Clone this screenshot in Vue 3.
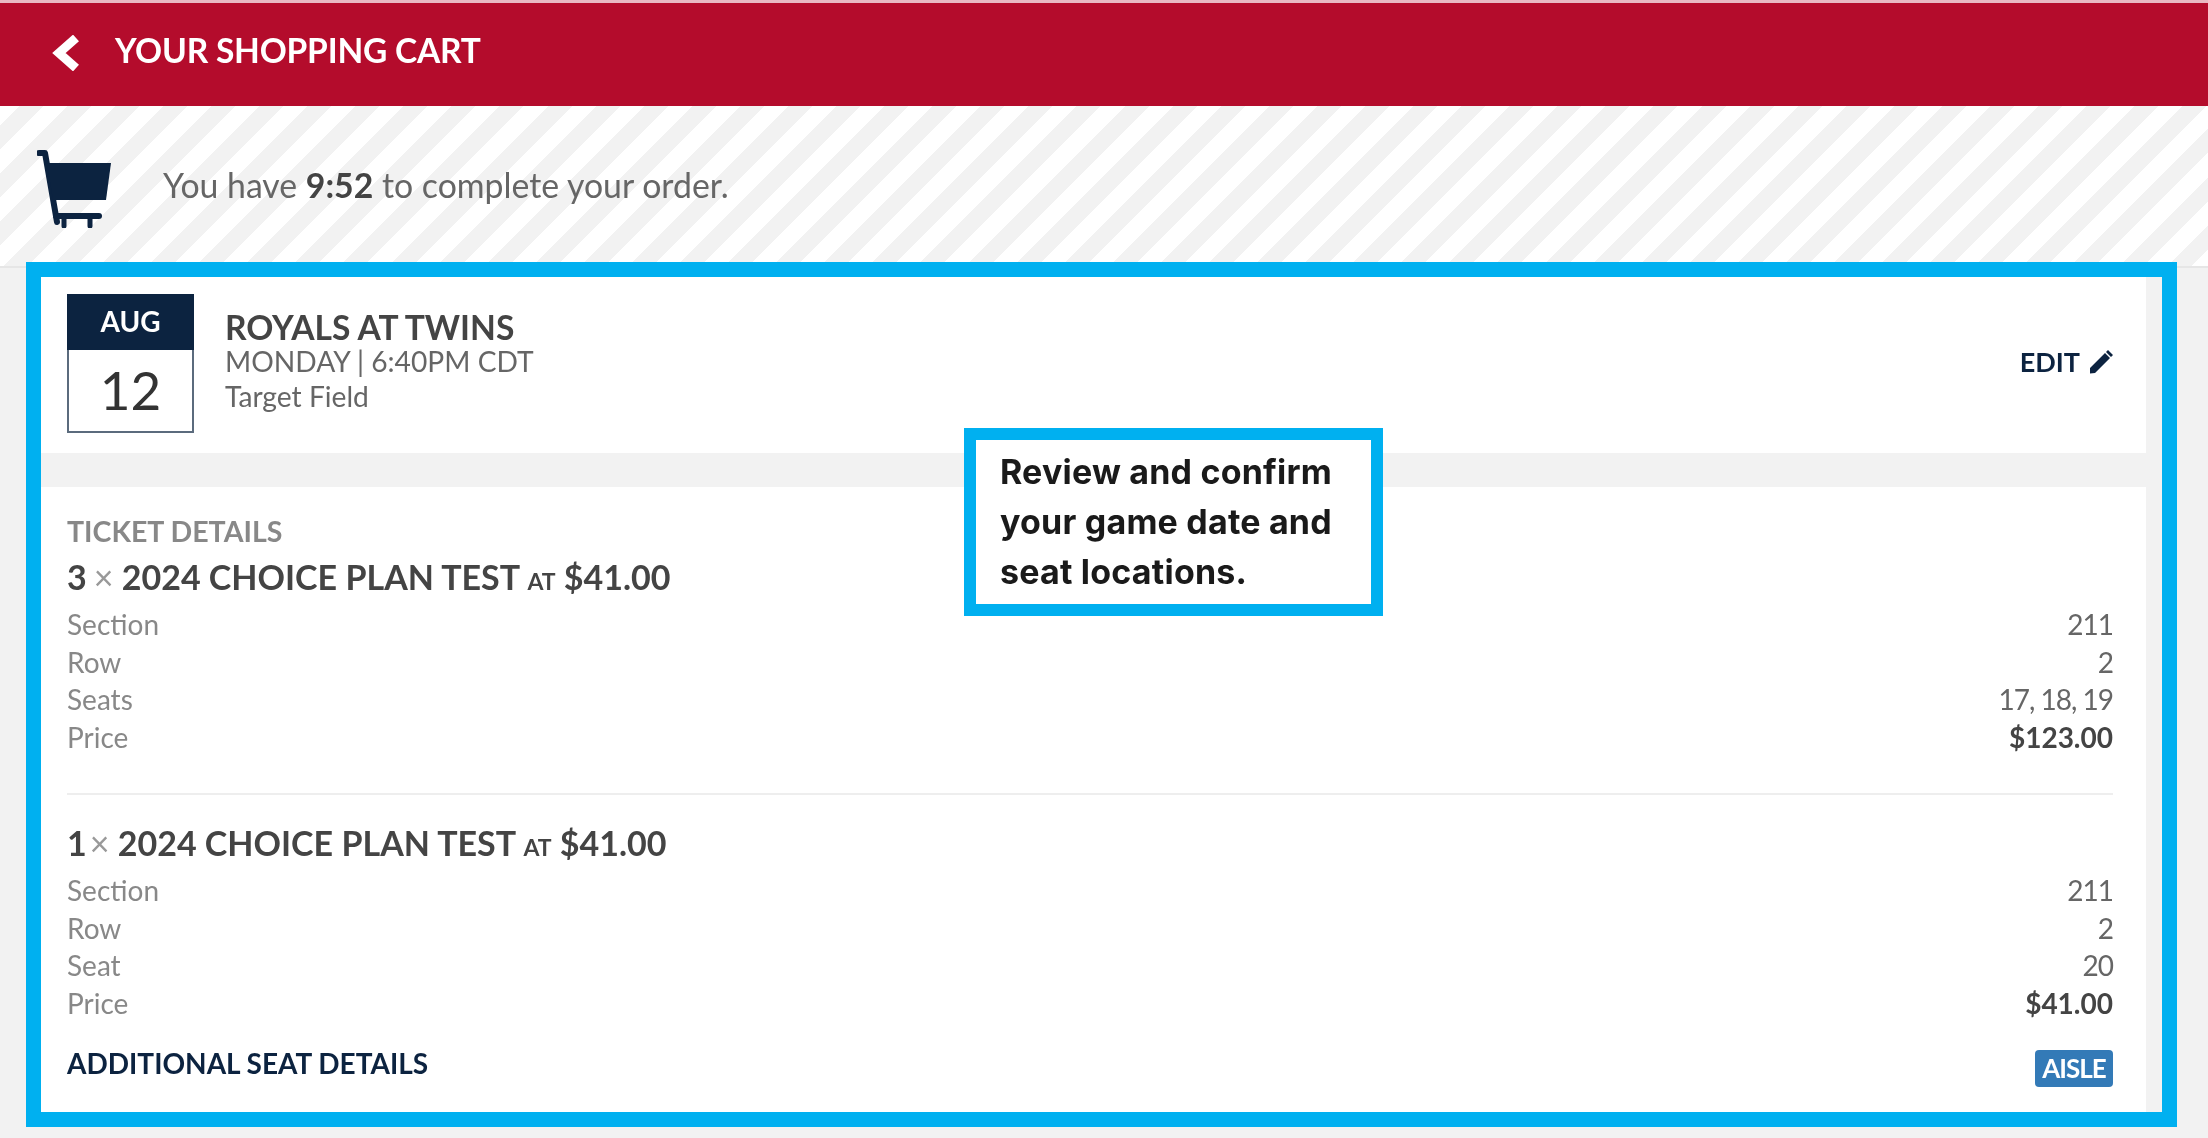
<script setup>
const groups = [
  { qty: '3', rows: [['Section', '211'], ['Row', '2'], ['Seats', '17, 18, 19']], price: '$123.00' },
  { qty: '1', rows: [['Section', '211'], ['Row', '2'], ['Seat', '20']], price: '$41.00' },
]
</script>

<template>
  <div class="page">
    <header class="bar">
      <svg class="back" viewBox="0 0 28 36" aria-hidden="true"><path d="M24 3 L7 18 L24 33" fill="none" stroke="#fff" stroke-width="9" stroke-linejoin="miter"/></svg>
      <h1>YOUR SHOPPING CART</h1>
    </header>
    <section class="timer">
      <svg class="cart" viewBox="0 0 74 78" aria-hidden="true">
        <path d="M2 3 H8 L20 72" fill="none" stroke="#0c2340" stroke-width="6" stroke-linecap="round" stroke-linejoin="round"/>
        <path d="M10 13 H74 L69 50 H16 Z" fill="#0c2340"/>
        <path d="M19 66 H62" fill="none" stroke="#0c2340" stroke-width="6" stroke-linecap="round"/>
        <path d="M27 66 V76 M53 66 V76" fill="none" stroke="#0c2340" stroke-width="5" stroke-linecap="round"/>
      </svg>
      <p>You have <b>9:52</b> to complete your order.</p>
    </section>
    <main class="frame">
      <section class="event">
        <div class="date"><div class="month">AUG</div><div class="day">12</div></div>
        <div class="info">
          <h2>ROYALS AT TWINS</h2>
          <div>MONDAY | 6:40PM CDT</div>
          <div>Target Field</div>
        </div>
        <a class="edit">EDIT
          <svg viewBox="0 0 28 28" aria-hidden="true"><path d="M21 2 L26 7 L24 9 L19 4 Z M18 5 L23 10 L8 25 L3 25.5 L3 20 Z" fill="#0c2340"/></svg>
        </a>
      </section>
      <section class="tickets">
        <div class="label">TICKET DETAILS</div>
        <div v-for="(g, i) in groups" :key="i" class="group" :class="{ second: i === 1 }">
          <h3>{{ g.qty }}<span class="x">×</span> 2024 CHOICE PLAN TEST <small>AT</small> $41.00</h3>
          <div v-for="r in g.rows" :key="r[0]" class="row"><span>{{ r[0] }}</span><span class="val">{{ r[1] }}</span></div>
          <div class="row"><span>Price</span><span class="price">{{ g.price }}</span></div>
        </div>
        <div class="extra"><span>ADDITIONAL SEAT DETAILS</span><span class="badge">AISLE</span></div>
      </section>
      <aside class="note">Review and confirm your game date and seat locations.</aside>
    </main>
  </div>
</template>

<style>
html, body { margin: 0; background: #f2f2f2; }
</style>

<style scoped>
.page { height: 1138px; overflow: hidden; background: #f2f2f2; font-family: Lato, "Liberation Sans", sans-serif; color: #666; filter: blur(.55px); }
.bar { height: 103px; border-top: 3px solid #e9b9c3; background: #b40c2c; display: flex; align-items: center; padding-left: 52px; color: #fff; }
.back { width: 28px; height: 36px; margin-right: 35px; margin-top: -3px; }
h1 { margin: -10px 0 0; font-size: 33.5px; font-weight: 700; letter-spacing: -.2px; }
.timer { height: 162px; box-sizing: border-box; border-bottom: 2px solid #e6e6e6; display: flex; align-items: center; padding: 0 0 2px 37px;
  background: repeating-linear-gradient(135deg, #fff 0 13.5px, #f2f2f2 13.5px 30.5px, #fff 30.5px 34px); }
.cart { width: 74px; height: 78px; margin: 8px 52px 0 0; }
.timer p { margin: 0; font-size: 33.8px; color: #666; }
.timer b { color: #444; }
.frame { position: relative; margin: -6px 31px 0 26px; height: 865px; box-sizing: border-box; border: 15px solid #00b0f0; padding-right: 16px; background: #f2f2f2; }
.event { height: 176px; box-sizing: border-box; background: #fff; display: flex; align-items: flex-start; padding: 17px 31px 0 26px; }
.date { width: 127px; height: 139px; box-sizing: border-box; border: 2px solid #5b6b7d; background: #fff; text-align: center; }
.month { height: 56px; margin: -2px -2px 0; background: #0c2340; color: #fff; font-size: 28px; font-weight: 700; line-height: 54px; }
.day { font-size: 53px; line-height: 80px; color: #333; }
.info { margin-left: 31px; padding-top: 16px; font-size: 28.2px; line-height: 34.5px; }
h2 { margin: 0; font-size: 33.6px; font-weight: 700; color: #444; line-height: 34px; }
.edit { margin: 51px 0 0 auto; display: flex; align-items: center; gap: 7px; font-size: 27px; font-weight: 700; color: #0c2340; }
.edit svg { width: 28px; height: 28px; }
.tickets { margin-top: 34px; height: 625px; box-sizing: border-box; background: #fff; padding: 26px 33px 0 26px; }
.label { font-size: 28.5px; font-weight: 700; color: #888; line-height: 36px; margin-bottom: 6px; }
h3 { margin: 0 0 3px; font-size: 34px; font-weight: 700; color: #444; line-height: 44px; }
.x { margin-left: 7px; color: #999; font-weight: 400; }
.second .x { margin-left: 3px; }
small { font-size: 23px; }
.row { display: flex; justify-content: space-between; font-size: 28px; line-height: 37.7px; color: #888; }
.val { color: #666; letter-spacing: -1px; }
.price { font-weight: 700; color: #444; }
.second { margin-top: 36px; border-top: 2px solid #eee; padding-top: 26px; }
.extra { margin-top: 22px; display: flex; justify-content: space-between; align-items: flex-start; font-size: 28px; line-height: 37px; font-weight: 700; color: #0c2340; }
.badge { width: 78px; height: 37px; margin-top: 5px; border-radius: 4px; background: #337ab7; color: #fff; font-size: 26px; line-height: 37px; text-align: center; letter-spacing: -1px; }
.note { position: absolute; left: 923px; top: 151px; width: 419px; height: 188px; box-sizing: border-box; border: 12px solid #00b0f0; background: #fff; padding: 7px 12px 0 24px; font-family: Inter, sans-serif; font-size: 34px; letter-spacing: .2px; line-height: 50px; font-weight: 700; color: #1a1a1a; }
</style>
